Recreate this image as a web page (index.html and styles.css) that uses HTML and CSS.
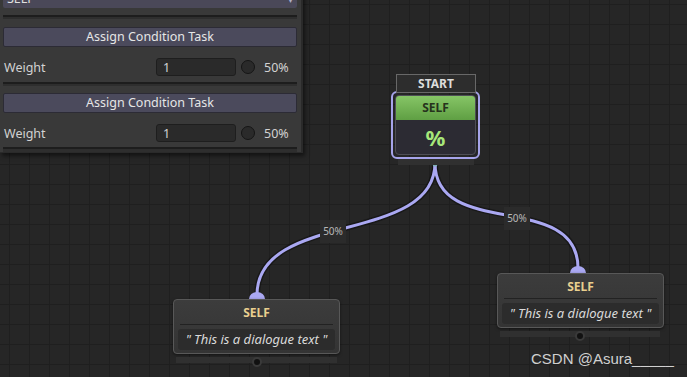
FILE: index.html
```html
<!DOCTYPE html>
<html lang="en">
<head>
  <meta charset="UTF-8">
  <title>Dialogue Tree</title>
  <link rel="stylesheet" href="styles.css">
</head>
<body>
  <div class="canvas">
    <!-- connections between the nodes -->
    <svg class="links" width="687" height="377" viewBox="0 0 687 377">
      <path class="link-shadow" d="M435,163 C435,245 257,210 257,295"/>
      <path class="link-shadow" d="M435,163 C435,240 578,190 578,268"/>
      <path class="link" d="M435,163 C435,245 257,210 257,295"/>
      <path class="link" d="M435,163 C435,240 578,190 578,268"/>
      <circle cx="435" cy="164" r="2.5" fill="#7fb3b8"/>
      <path d="M249,299 A8,7 0 0 1 265,299 Z" fill="#aaa8f2"/>
      <path d="M570,273 A8,7 0 0 1 586,273 Z" fill="#aaa8f2"/>
    </svg>
    <span class="link-label label-left">50%</span>
    <span class="link-label label-right">50%</span>

    <!-- inspector window -->
    <div class="inspector">
      <div class="dropdown">SELF <span class="arrow">&#9662;</span></div>
      <div class="separator"></div>
      <div class="task-button">Assign Condition Task</div>
      <div class="weight-row">
        <span class="weight-label">Weight</span>
        <span class="weight-field">1</span>
        <span class="weight-dot"></span>
        <span class="weight-pct">50%</span>
      </div>
      <div class="separator"></div>
      <div class="task-button">Assign Condition Task</div>
      <div class="weight-row">
        <span class="weight-label">Weight</span>
        <span class="weight-field">1</span>
        <span class="weight-dot"></span>
        <span class="weight-pct">50%</span>
      </div>
      <div class="separator"></div>
    </div>

    <!-- start node -->
    <div class="start-tag">START</div>
    <div class="start-node">
      <div class="start-inner">
        <div class="start-head">SELF</div>
        <div class="start-body">%</div>
      </div>
    </div>
    <div class="node-foot start-foot"></div>

    <!-- dialogue nodes -->
    <div class="say-node say-left">
      <div class="say-title">SELF</div>
      <div class="say-text">" This is a dialogue text "</div>
    </div>
    <div class="node-foot say-left-foot"><span class="port"></span></div>

    <div class="say-node say-right">
      <div class="say-title">SELF</div>
      <div class="say-text">" This is a dialogue text "</div>
    </div>
    <div class="node-foot say-right-foot"><span class="port"></span></div>

    <div class="watermark">CSDN @Asura_____</div>
  </div>
</body>
</html>
```

FILE: styles.css
```css
body {
  margin: 0;
  font-family: "Noto Sans", "Open Sans", sans-serif;
}

.canvas {
  position: relative;
  width: 687px;
  height: 377px;
  overflow: hidden;
  background-color: #262626;
  background-image:
    linear-gradient(to right, #1f1f1f 1px, transparent 1px),
    linear-gradient(to bottom, #1f1f1f 1px, transparent 1px);
  background-size: 20px 20px;
  background-position: 9px 4px;
}

.links {
  position: absolute;
  left: 0;
  top: 0;
}

.link {
  fill: none;
  stroke: #aaa8f2;
  stroke-width: 3;
}

.link-shadow {
  fill: none;
  stroke: rgba(0, 0, 0, 0.35);
  stroke-width: 6;
}

.link-label {
  position: absolute;
  width: 26px;
  height: 23px;
  line-height: 23px;
  text-align: center;
  background: #2b2b2b;
  color: #b8b8b8;
  font-size: 10px;
}

.label-left { left: 320px; top: 220px; }
.label-right { left: 504px; top: 207px; }

/* inspector */
.inspector {
  position: absolute;
  left: 0;
  top: -12px;
  width: 294px;
  padding: 2px 4px 0 3px;
  background: #393939;
  border-right: 2px solid #2a2a2a;
  border-bottom: 1px solid #2a2a2a;
  box-shadow: 2px 3px 4px rgba(0, 0, 0, 0.5);
  color: #d2d2d2;
  font-size: 12.5px;
}

.dropdown {
  display: flex;
  justify-content: space-between;
  height: 18px;
  line-height: 18px;
  padding: 0 4px;
  background: #4a4858;
  border-radius: 2px;
  color: #e0e0e0;
}

.dropdown .arrow {
  color: #b0b0c8;
  font-size: 10px;
}

.separator {
  height: 2px;
  margin: 7px 0 8px;
  border-top: 2px solid #1d1d1d;
  background: #2e2e2e;
}

.task-button {
  height: 18px;
  line-height: 18px;
  text-align: center;
  background: #4b4a5c;
  border: 1px solid #2c2b35;
  border-radius: 2px;
  color: #e6e6e6;
}

.weight-row {
  display: flex;
  align-items: center;
  height: 18px;
  margin-top: 11px;
}

.weight-label {
  width: 152px;
  padding-left: 1px;
}

.weight-field {
  width: 72px;
  height: 16px;
  line-height: 17px;
  padding-left: 6px;
  background: #2a2a2a;
  border: 1px solid #1e1e1e;
  border-radius: 3px;
}

.weight-dot {
  width: 12px;
  height: 12px;
  margin-left: 5px;
  border-radius: 50%;
  background: #2a2a2a;
  border: 1px solid #151515;
}

.weight-pct {
  margin-left: 9px;
}

.weight-row + .separator {
  margin-top: 6px;
  margin-bottom: 7px;
}

.inspector > .separator:last-child {
  margin-top: 5px;
  margin-bottom: 0;
  height: 3px;
}

/* start node */
.start-tag {
  position: absolute;
  left: 396px;
  top: 74px;
  width: 78px;
  height: 17px;
  line-height: 17px;
  text-align: center;
  background: #2d2d2d;
  border: 1px solid #686868;
  color: #dcdcdc;
  font-size: 12px;
  font-weight: bold;
  z-index: 2;
}

.start-node {
  position: absolute;
  left: 391px;
  top: 91px;
  width: 81px;
  height: 60px;
  padding: 2px;
  border: 2px solid #a6a4ea;
  border-radius: 6px;
}

.start-inner {
  height: 100%;
  box-sizing: border-box;
  background: #2c2b33;
  border: 1px solid #4e4e56;
  border-radius: 4px;
  overflow: hidden;
  display: flex;
  flex-direction: column;
}

.start-head {
  height: 24px;
  line-height: 24px;
  text-align: center;
  background: linear-gradient(#86c566, #5f9f43);
  color: #26331c;
  font-size: 12px;
  font-weight: bold;
}

.start-body {
  flex: 1;
  display: flex;
  align-items: center;
  justify-content: center;
  color: #a6e77a;
  font-size: 22px;
  font-weight: bold;
}

.node-foot {
  position: absolute;
  height: 6px;
  background: #303030;
  display: flex;
  justify-content: center;
}

.start-foot { left: 398px; top: 159px; width: 76px; }

/* dialogue nodes */
.say-node {
  position: absolute;
  width: 167px;
  height: 55px;
  padding: 0 4px;
  box-sizing: border-box;
  background: linear-gradient(#3c3c3c, #343434);
  border: 1px solid #585858;
  border-radius: 4px;
  box-shadow: 0 1px 3px rgba(0, 0, 0, 0.5);
}

.say-left { left: 173px; top: 299px; }
.say-right { left: 497px; top: 273px; }

.say-title {
  height: 24px;
  line-height: 25px;
  margin: 0 2px;
  text-align: center;
  border-bottom: 1px solid #222;
  color: #e9cf8f;
  font-size: 12px;
  font-weight: bold;
}

.say-text {
  height: 21px;
  margin-top: 4px;
  line-height: 21px;
  text-align: center;
  background: #2c2c2c;
  border-radius: 3px;
  color: #dadada;
  font-size: 13px;
  font-style: italic;
}

.say-left-foot { left: 176px; top: 357px; width: 161px; }
.say-right-foot { left: 500px; top: 331px; width: 160px; }

.port {
  width: 6px;
  height: 6px;
  border-radius: 50%;
  background: #111;
  border: 2px solid #3a3a3a;
}

.watermark {
  position: absolute;
  left: 531px;
  top: 350px;
  color: #d0d0d0;
  font-family: "Liberation Sans", Arial, sans-serif;
  font-size: 15px;
}
```
